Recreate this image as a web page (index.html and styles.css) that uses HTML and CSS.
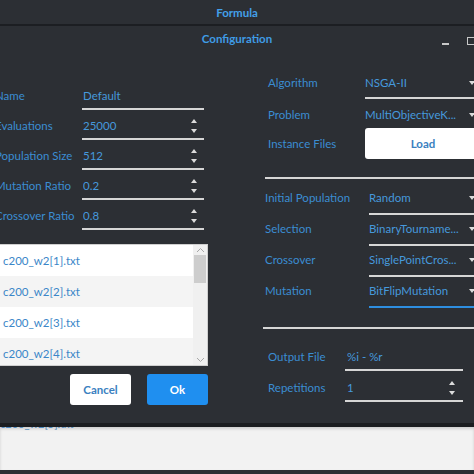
FILE: index.html
```html
<!DOCTYPE html>
<html>
<head>
<meta charset="utf-8">
<link rel="stylesheet" href="styles.css">
</head>
<body>
<div class="app">
  <div class="titlebar">Formula</div>
  <div class="dialog">
    <div class="dlg-head">
      <span></span>
      <span class="dlg-title">Configuration</span>
      <div class="win-ctl"><span class="min"></span><span class="max"></span></div>
    </div>
    <div class="dlg-body">
      <div class="col-left">
        <div class="form-row"><span class="lbl">Name</span><div class="field"><span class="val">Default</span></div></div>
        <div class="form-row"><span class="lbl">Evaluations</span><div class="field"><span class="val">25000</span><span class="spin"><i class="up"></i><i class="down"></i></span></div></div>
        <div class="form-row"><span class="lbl">Population Size</span><div class="field"><span class="val">512</span><span class="spin"><i class="up"></i><i class="down"></i></span></div></div>
        <div class="form-row"><span class="lbl">Mutation Ratio</span><div class="field"><span class="val">0.2</span><span class="spin"><i class="up"></i><i class="down"></i></span></div></div>
        <div class="form-row"><span class="lbl">Crossover Ratio</span><div class="field"><span class="val">0.8</span><span class="spin"><i class="up"></i><i class="down"></i></span></div></div>
        <div class="list">
          <div class="items">
            <div class="item">c200_w2[1].txt</div>
            <div class="item">c200_w2[2].txt</div>
            <div class="item">c200_w2[3].txt</div>
            <div class="item">c200_w2[4].txt</div>
          </div>
          <div class="scrollbar">
            <div class="sb-btn"><svg width="9" height="6" viewBox="0 0 9 6"><polyline points="1,5 4.5,1.5 8,5" fill="none" stroke="#a8a8a8" stroke-width="1"/></svg></div>
            <div class="thumb"></div>
            <div class="sb-space"></div>
            <div class="sb-btn"><svg width="9" height="6" viewBox="0 0 9 6"><polyline points="1,1 4.5,4.5 8,1" fill="none" stroke="#a8a8a8" stroke-width="1"/></svg></div>
          </div>
        </div>
        <div class="buttons">
          <div class="btn cancel">Cancel</div>
          <div class="btn ok">Ok</div>
        </div>
      </div>
      <div class="col-right">
        <div class="block1">
          <div class="r-row"><span class="r-lbl">Algorithm</span><div class="combo"><span class="val">NSGA-II</span><i class="arrow"></i></div></div>
          <div class="r-row prob"><span class="r-lbl">Problem</span><div class="combo plain"><span class="val">MultiObjectiveK...</span><i class="arrow"></i></div></div>
          <div class="r-row load-row"><span class="r-lbl">Instance Files</span><div class="load">Load</div></div>
        </div>
        <div class="sep first"></div>
        <div class="block2">
          <div class="r-row"><span class="r-lbl">Initial Population</span><div class="combo"><span class="val">Random</span><i class="arrow"></i></div></div>
          <div class="r-row"><span class="r-lbl">Selection</span><div class="combo"><span class="val">BinaryTourname...</span><i class="arrow"></i></div></div>
          <div class="r-row"><span class="r-lbl">Crossover</span><div class="combo"><span class="val">SinglePointCros...</span><i class="arrow"></i></div></div>
          <div class="r-row"><span class="r-lbl">Mutation</span><div class="combo focused"><span class="val">BitFlipMutation</span><i class="arrow"></i></div></div>
        </div>
        <div class="sep second"></div>
        <div class="block3">
          <div class="r-row"><span class="r-lbl">Output File</span><div class="field2"><span class="val">%i - %r</span></div></div>
          <div class="r-row"><span class="r-lbl">Repetitions</span><div class="field2"><span class="val">1</span><span class="spin"><i class="up"></i><i class="down"></i></span></div></div>
        </div>
      </div>
    </div>
  </div>
  <div class="below"><div class="ghost">c200_w2[5].txt</div></div>
  <div class="footer"></div>
</div>
</body>
</html>
```
FILE: styles.css
```css
* { box-sizing: border-box; margin: 0; padding: 0; }
html, body { width: 474px; height: 474px; overflow: hidden; }
body {
  background: #2c2f34;
  font-family: Lato, "Open Sans", sans-serif;
  font-size: 11.5px;
  line-height: 14px;
  color: #3b8dd2;
}
.app { display: flex; flex-direction: column; height: 474px; }

.titlebar {
  height: 26px;
  flex: none;
  border-bottom: 2px solid #1c1e22;
  text-align: center;
  padding-top: 6px;
  font-weight: 700;
  color: #43a0ea;
}

.dialog {
  height: 401px;
  flex: none;
  border-bottom: 4px solid #1b1d20;
  display: flex;
  flex-direction: column;
  overflow: hidden;
}
.dlg-head {
  height: 26px;
  flex: none;
  display: grid;
  grid-template-columns: 1fr auto 1fr;
  padding-top: 6px;
}
.dlg-title { font-weight: 700; color: #3f9ce6; }
.win-ctl { justify-self: end; display: flex; align-items: flex-start; gap: 18px; margin-right: -3px; }
.win-ctl .min { width: 7px; height: 2px; background: #c8c8c8; margin-top: 11px; }
.win-ctl .max { width: 10px; height: 8px; border: 1.5px solid #c8c8c8; margin-top: 5px; }

.dlg-body { display: flex; flex: 1; overflow: hidden; }

.col-left {
  width: 213px;
  flex: none;
  margin-left: -5px;
  padding-top: 35px;
  display: flex;
  flex-direction: column;
}
.form-row { display: flex; height: 30px; flex: none; }
.form-row .lbl { width: 87px; padding-top: 2px; white-space: nowrap; }
.field {
  flex: 0 0 122px;
  height: 23px;
  border-bottom: 2px solid #d6d6d6;
  display: flex;
  padding: 2px 7px 0 1px;
}
.val { flex: 1; color: #4699dc; white-space: nowrap; overflow: hidden; }
.spin { display: flex; flex-direction: column; gap: 6px; }
.spin i { display: block; width: 0; height: 0; border-left: 3.5px solid transparent; border-right: 3.5px solid transparent; }
.spin .up { border-bottom: 4px solid #dcdcdc; }
.spin .down { border-top: 4px solid #dcdcdc; }

.list {
  margin-top: 7px;
  height: 122px;
  flex: none;
  background: #fff;
  border: 1px solid #cfcfcf;
  display: flex;
  overflow: hidden;
}
.items { flex: 1; }
.item {
  height: 31px;
  padding-left: 7px;
  display: flex;
  align-items: center;
  color: #3a86c8;
  background: #fff;
}
.item:nth-child(even) { background: #f4f4f4; }
.scrollbar { width: 14px; background: #f0f0f0; display: flex; flex-direction: column; align-items: center; }
.sb-btn { height: 10px; display: flex; align-items: center; justify-content: center; }
.thumb { width: 12px; height: 28px; background: #cdcdcd; }
.sb-space { flex: 1; }

.buttons { margin-top: 8px; display: flex; justify-content: flex-end; gap: 16px; }
.btn {
  width: 61px;
  height: 31px;
  border-radius: 3px;
  font-weight: 700;
  display: flex;
  align-items: center;
  justify-content: center;
}
.cancel { background: #fff; color: #3a7fc0; }
.ok { background: #1f8ff0; color: #fff; }

.col-right { width: 218px; flex: none; margin-left: 55px; padding-top: 22px; }
.r-row { display: flex; }
.r-lbl { white-space: nowrap; padding-top: 2px; flex: none; }
.combo {
  flex: 1;
  height: 25px;
  display: flex;
  align-items: flex-start;
  padding: 2px 6px 0 0;
  border-bottom: 2px solid #d6d6d6;
}
.combo .arrow {
  display: block; width: 0; height: 0;
  border-left: 3.5px solid transparent;
  border-right: 3.5px solid transparent;
  border-top: 4px solid #dcdcdc;
  margin-top: 5px;
}
.combo.plain { border-bottom: none; height: 22px; }
.combo.focused { border-bottom-color: #2e8ee0; }

.block1 { padding-left: 5px; }
.block1 .r-lbl { width: 97px; }
.block1 .prob { margin-top: 7px; }
.load-row { align-items: center; }
.load-row .r-lbl { padding-top: 0; }
.load {
  width: 116px;
  height: 31px;
  background: #fff;
  border-radius: 3px;
  color: #3a7fc0;
  font-weight: 700;
  display: flex;
  align-items: center;
  justify-content: center;
}

.sep { height: 2px; background: #d6d6d6; }
.sep.first { margin-top: 18px; margin-left: 2px; }
.sep.second { margin-top: 19px; }

.block2 { margin-top: 10px; padding-left: 2px; display: flex; flex-direction: column; gap: 5px; }
.block2 .r-lbl { width: 104px; }
.block2 .combo { height: 26px; }

.block3 { margin-top: 19px; padding-left: 5px; display: flex; flex-direction: column; gap: 8px; }
.block3 .r-lbl { width: 77px; }
.field2 {
  flex: 0 0 118px;
  width: 118px;
  height: 23px;
  border-bottom: 2px solid #d6d6d6;
  display: flex;
  padding: 2px 8px 0 2px;
}

.below {
  height: 43px;
  flex: none;
  background: #f2f2f2;
  overflow: hidden;
  box-shadow: inset 0 2px 3px rgba(0, 0, 0, 0.15);
}
.ghost { margin-top: -10px; color: #4a88c0; font-size: 11px; }
.footer { height: 4px; flex: none; background: #2c2f34; }
```
